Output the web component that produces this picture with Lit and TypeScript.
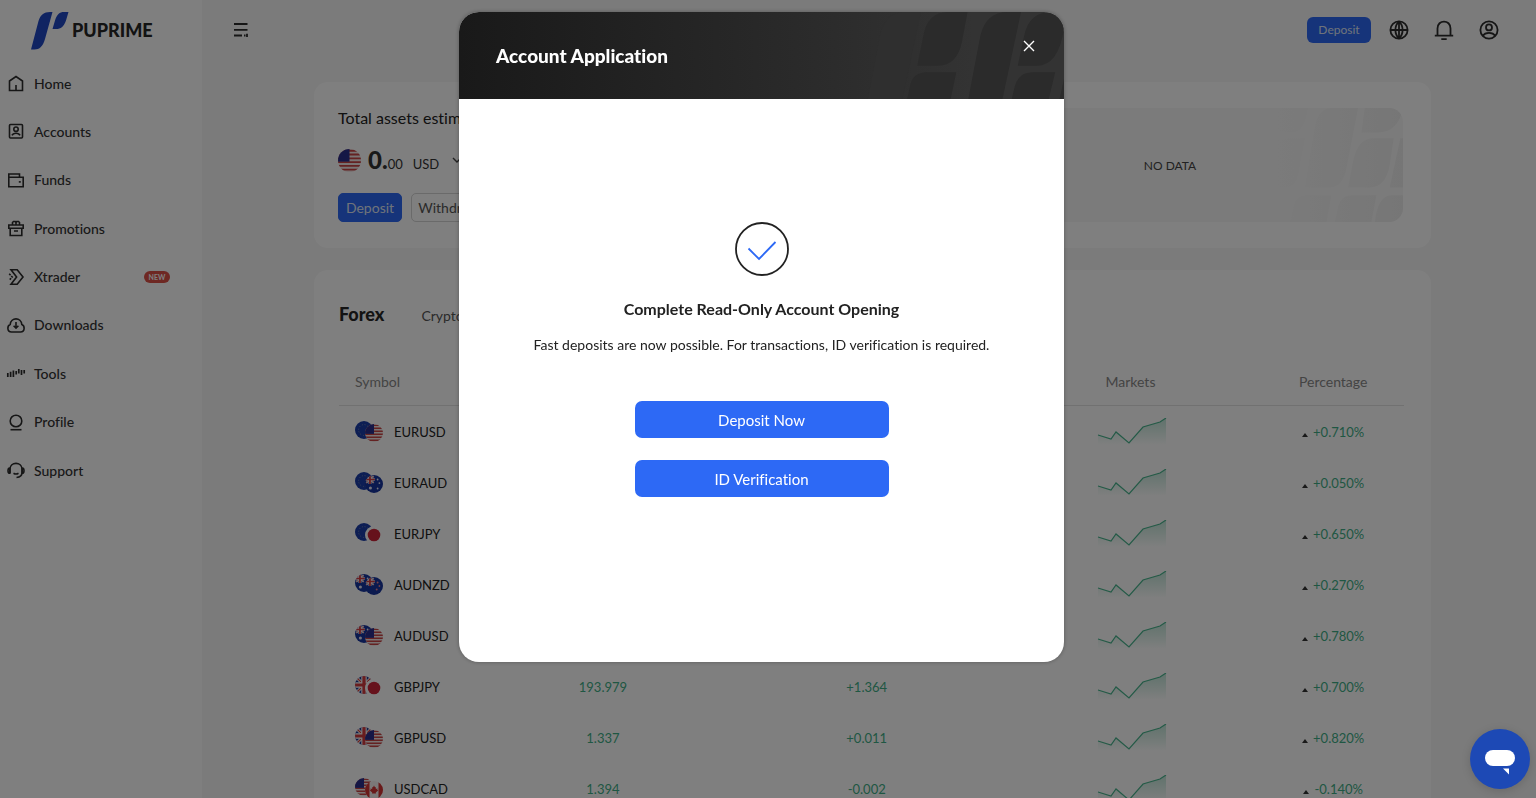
import { LitElement, html, svg, css, nothing, type SVGTemplateResult } from "lit";
import { customElement, property } from "lit/decorators.js";

type Quote = { symbol: string; pct: string; price?: string; change?: string };

const QUOTES: Quote[] = [
  { symbol: "EURUSD", pct: "+0.710%" },
  { symbol: "EURAUD", pct: "+0.050%" },
  { symbol: "EURJPY", pct: "+0.650%" },
  { symbol: "AUDNZD", pct: "+0.270%" },
  { symbol: "AUDUSD", pct: "+0.780%" },
  { symbol: "GBPJPY", pct: "+0.700%", price: "193.979", change: "+1.364" },
  { symbol: "GBPUSD", pct: "+0.820%", price: "1.337", change: "+0.011" },
  { symbol: "USDCAD", pct: "-0.140%", price: "1.394", change: "-0.002" },
];

// Sidebar glyphs on a 20x20 grid.
const NAV: { label: string; badge?: string; icon: SVGTemplateResult }[] = [
  {
    label: "Home",
    icon: svg`<path d="M3.500 8 10 3.500 16.500 8v9.500h-13z"/><path d="M10 12v5.500"/>`,
  },
  {
    label: "Accounts",
    icon: svg`<rect x="3.500" y="3.500" width="13" height="13.500" rx="1"/><circle cx="10" cy="8.200" r="2.200"/><path d="M6 14.400c1.200-2.800 6.800-2.800 8 0"/>`,
  },
  {
    label: "Funds",
    icon: svg`<path d="M2.800 7.200V4h10.700v3.200M2.800 7.200h14.400v9.500H2.800z"/><path d="M12.800 11.900h2"/>`,
  },
  {
    label: "Promotions",
    icon: svg`<path d="M2.800 7h14.400v3.300H2.800zM4.200 10.300h11.600v7.200H4.200z"/><path d="M6.500 7V4.500L7.500 3.500h1.800l.700 1 .700-1h1.800l1 1V7M10 4.500V7M8 13h4"/>`,
  },
  {
    label: "Xtrader",
    badge: "NEW",
    icon: svg`<path d="M5 2.800h6.200L17 10l-5.800 7.200H5L10.600 10z"/><path d="m3.200 6.800 3 3.200-3 3.200" stroke-dasharray="2 1"/>`,
  },
  {
    label: "Downloads",
    icon: svg`<path d="M5.500 17C.800 17 1 10.500 4.200 9.500c.500-7.500 11.100-7.500 11.600 0 3.200 1 3.400 7.500-1.300 7.500z"/><path d="M10 7v6M7.600 10.800 10 13.200l2.400-2.400"/>`,
  },
  {
    label: "Tools",
    icon: svg`<path stroke-width="1.700" d="M1.800 10v4M4.600 8.800v5.200M7.400 7.500V14M10.200 8v3.500M12.800 6v4.500M15.500 7v5M18.200 7v3.500"/>`,
  },
  {
    label: "Profile",
    icon: svg`<circle cx="10" cy="9" r="5.800"/><path d="M4.500 17.700h11"/>`,
  },
  {
    label: "Support",
    icon: svg`<path d="M4 13V9c0-7.500 12-7.500 12 0v4c0 2.400-2 4-5.500 4.500"/><path d="M3.800 8C1.400 8 1.400 13.300 3.800 13.300zM16.200 8c2.400 0 2.400 5.300 0 5.300z"/><path d="M7.500 13.200c1.500.900 3.500.900 5 0"/>`,
  },
];

const UNION = svg`
  <path d="M2.500 2.500l15 15M17.500 2.500l-15 15" stroke="#fff" stroke-width="3.400"/>
  <path d="M2.500 2.500l15 15M17.500 2.500l-15 15" stroke="#d8453f" stroke-width="1.200"/>
  <path d="M10 0v20M0 10h20" stroke="#fff" stroke-width="6"/>
  <path d="M10 0v20M0 10h20" stroke="#d23a3f" stroke-width="3.600"/>`;

const southern = (stars: SVGTemplateResult) => svg`
  <rect width="20" height="20" fill="#17349e"/>
  <svg width="11" height="10" viewBox="0 0 20 20" preserveAspectRatio="none">${UNION}</svg>${stars}`;

const FLAGS: Record<string, SVGTemplateResult> = {
  USD: svg`
    <rect width="20" height="20" fill="#f3e6e6"/>
    <path stroke="#c84444" stroke-width="1.600" d="M0 1.500h20M0 4.800h20M0 8.100h20M0 11.400h20M0 14.700h20M0 18h20"/>
    <rect width="10" height="11" fill="#2b2f8c"/>`,
  EUR: svg`
    <rect width="20" height="20" fill="#1a3ca8"/>
    <circle cx="10" cy="10" r="6" fill="none" stroke="#8a93a8" stroke-width="1" stroke-dasharray="1 2.140"/>`,
  JPY: svg`<rect width="20" height="20" fill="#fff"/><circle cx="10" cy="10" r="7" fill="#cc2439"/>`,
  GBP: svg`<rect width="20" height="20" fill="#1e3590"/>${UNION}`,
  AUD: southern(svg`<g fill="#e6e6f4"><circle cx="6" cy="14.500" r="1.700"/><circle cx="14" cy="5" r="1"/><circle cx="16" cy="9" r="1"/><circle cx="14" cy="15" r="1"/></g>`),
  NZD: southern(svg`<g fill="#e8808a"><circle cx="14" cy="6" r="1.100"/><circle cx="16" cy="10" r="1"/><circle cx="13" cy="14" r="1.100"/></g>`),
  CAD: svg`
    <rect width="20" height="20" fill="#f6f0f0"/>
    <path d="M0 0h5v20H0zM15 0h5v20h-5z" fill="#d23535"/>
    <path d="m10 5 1.200 2.200 1-.400-.200 2 2-.600-.400 1.600 1 .800-2.600 2.200.200 1H7.800l.200-1-2.600-2.200 1-.800L6 8.200l2 .600-.200-2 1 .400z" fill="#d23535"/>`,
};

@customElement("flag-disc")
class FlagDisc extends LitElement {
  @property() code = "USD";
  static styles = css`
    :host { display: block; border-radius: 50%; overflow: hidden; }
    .flag { display: block; width: 100%; height: 100%; }
  `;
  render() {
    return html`<svg class="flag" viewBox="0 0 20 20" aria-hidden="true">${FLAGS[this.code]}</svg>`;
  }
}

@customElement("side-nav")
class SideNav extends LitElement {
  static styles = css`
    :host { display: block; background: #fff; }
    .logo { display: flex; align-items: center; gap: 3px; padding: 11px 0 0 30px; color: #262626; }
    .mark { width: 39px; height: 39px; }
    .name { font-size: 18px; font-weight: 900; line-height: 39px; }
    .list { display: flex; flex-direction: column; justify-content: space-between; min-height: 411px;
      margin: 21px 0 0; padding: 0; list-style: none; }
    .link { display: flex; align-items: center; height: 24px; padding: 0 32px 0 6px; gap: 8px;
      font-size: 14px; font-weight: 500; color: #333; text-decoration: none; }
    .icon { width: 20px; height: 20px; fill: none; stroke: #2c2c2c; stroke-width: 1.6; }
    .badge { margin-left: auto; width: 26px; border-radius: 6px; background: #dc5046; color: #fff;
      font-size: 7px; font-weight: 700; line-height: 12px; text-align: center; }
  `;
  render() {
    return html`
      <div class="logo">
        <svg class="mark" viewBox="0 0 39 39" aria-hidden="true">
          <path fill="#2149c4" d="M1 38.500 8.500 10C10.300 4 14 1 20 1h2.500L15 28C13 35.500 9.500 38.500 4.500 38.500zM22.500 18 25 9.500C26.800 3.500 29.500 1 34 1h4.500L36 9.500C34 15.500 31 18 26 18z"/>
        </svg>
        <span class="name">PUPRIME</span>
      </div>
      <nav aria-label="Main">
        <ul class="list">
          ${NAV.map(
            (n) => html`<li><a class="link" href="#">
              <svg class="icon" viewBox="0 0 20 20" aria-hidden="true">${n.icon}</svg>
              <span>${n.label}</span>
              ${n.badge ? html`<span class="badge">${n.badge}</span>` : nothing}
            </a></li>`
          )}
        </ul>
      </nav>`;
  }
}

@customElement("top-bar")
class TopBar extends LitElement {
  static styles = css`
    :host { display: flex; align-items: center; height: 60px; padding: 0 36px 0 28px; }
    button { border: 0; padding: 0; background: none; font: inherit; }
    .icon { display: block; width: 22px; height: 22px; fill: none; stroke: #2c2c2c; stroke-width: 1.8; }
    .right { display: flex; align-items: center; margin-left: auto; gap: 23px; }
    .deposit { width: 64px; height: 26px; margin-right: -6px; border-radius: 6px; background: #2d68f5;
      color: #dfe6f5; font-size: 12px; line-height: 26px; }
  `;
  render() {
    return html`
      <button aria-label="Toggle menu">
        <svg class="icon" viewBox="0 0 22 22"><path d="M4 5h13.500M4 10.800h13.500M4 16.500h8M14 16.500h1.500M17 14.800v3.200"/></svg>
      </button>
      <div class="right">
        <button class="deposit">Deposit</button>
        <button aria-label="Language">
          <svg class="icon" viewBox="0 0 22 22"><circle cx="11" cy="11" r="8.600"/><path d="M2.400 11h17.200M11 2.400v17.200M11 2.400c-4.800 4.600-4.800 12.600 0 17.200M11 2.400c4.800 4.600 4.800 12.600 0 17.200"/></svg>
        </button>
        <button aria-label="Notifications">
          <svg class="icon" viewBox="0 0 22 22"><path d="M4.500 16.500V9.500c0-9.300 13-9.300 13 0v7M1.800 16.700h18.400M8.300 20.200h5.400"/></svg>
        </button>
        <button aria-label="Profile">
          <svg class="icon" viewBox="0 0 22 22"><circle cx="11" cy="11" r="8.600"/><circle cx="11" cy="8.400" r="3"/><path d="M4.800 16.800c2.400-4 10-4 12.400 0"/></svg>
        </button>
      </div>`;
  }
}

@customElement("assets-card")
class AssetsCard extends LitElement {
  static styles = css`
    :host { display: flex; gap: 24px; padding: 25px 28px 26px 24px; border-radius: 14px; background: #fff; }
    .left { flex: 5; }
    .title { margin: 0; font-size: 16px; font-weight: 400; line-height: 22px; color: #222; }
    .balance { display: flex; align-items: center; height: 30px; margin: 16px 0 18px; color: #333; }
    .flag { width: 23px; height: 23px; margin-right: 7px; }
    .whole { font-size: 24px; font-weight: 900; line-height: 28px; }
    .sum { display: flex; align-items: baseline; gap: 10px; }
    .cents { font-size: 13px; }
    .chevron { width: 10px; height: 10px; margin-left: 13px; fill: none; stroke: #444; stroke-width: 1.4; }
    .actions { display: flex; gap: 9px; }
    button { height: 29px; padding: 0; border: 1px solid #d4d4d4; border-radius: 5px; background: none;
      font: inherit; font-size: 14px; line-height: 26px; color: #555; }
    .primary { width: 64px; border-color: #2d68f5; background: #2d68f5; color: #dfe6f5; }
    .plain { width: 76px; }
    .panel { flex: 0 0 466px; display: grid; margin-top: 1px; border-radius: 14px; overflow: hidden; background: #f7f7f7; }
    .panel > * { grid-area: 1 / 1; }
    .empty { place-self: center; font-size: 12px; color: #444; }
    .art { justify-self: end; width: 143px; height: 114px; }
  `;
  render() {
    return html`
      <div class="left">
        <h2 class="title">Total assets estimation</h2>
        <div class="balance">
          <flag-disc class="flag" code="USD"></flag-disc>
          <span class="sum"><span><span class="whole">0.</span><span class="cents">00</span></span><span class="cents">USD</span></span>
          <svg class="chevron" viewBox="0 0 10 10"><path d="m1 3 4 4 4-4"/></svg>
        </div>
        <div class="actions"><button class="primary">Deposit</button><button class="plain">Withdraw</button></div>
      </div>
      <div class="panel">
        <svg class="art" viewBox="600 85 430 340" preserveAspectRatio="none" aria-hidden="true">
          <defs><linearGradient id="f" x1="600" x2="1030" y1="0" y2="0" gradientUnits="userSpaceOnUse">
            <stop offset="0" stop-color="#efefef" stop-opacity="0"/><stop offset="1" stop-color="#ededed"/>
          </linearGradient></defs>
          <path fill="url(#f)" d="M905 158 915 85h115q-15 73-75 73zM865 322l15-80q15-67 60-67h62l-12 80q-12 67-60 67zM990 322l32-147h8v147zM735 322l30-180q10-57 50-57h80l-35 180q-12 57-50 57zM825 425l10-45q8-35 40-35h75l-15 80zM945 425q10-80 50-80h35v80zM620 158l10-40q10-33 40-33h75l-10 40q-10 33-45 33zM610 322l20-110q8-37 40-37h65l-20 110q-8 37-45 37zM690 425l10-45q8-35 40-35h75l-15 80z"/>
        </svg>
        <span class="empty">NO DATA</span>
      </div>`;
  }
}

@customElement("quotes-card")
class QuotesCard extends LitElement {
  static styles = css`
    :host { display: block; padding: 32px 27px 0 25px; border-radius: 14px; background: #fff; }
    .tabs { display: flex; align-items: baseline; gap: 37px; }
    .tabs button { padding: 0; border: 0; background: none; font: inherit; font-size: 14px; line-height: 24px; color: #555; }
    .tabs .active { font-size: 18px; font-weight: 900; color: #262626; }
    table { width: 100%; margin-top: 30px; border-collapse: collapse; table-layout: fixed; font-size: 13px; }
    .narrow { width: 12.4%; }
    .last { width: 13.3%; }
    th { height: 47px; padding: 0; border-bottom: 1px solid #e2e2e2; font-weight: 400; font-size: 14px; color: #888; }
    td { height: 51px; padding: 0; text-align: center; color: #3fae86; }
    .first { padding-left: 16px; text-align: left; }
    .symbol { display: flex; align-items: center; color: #222; }
    .pair { display: flex; width: 28px; margin-right: 11px; }
    .base { width: 18px; height: 18px; }
    .quote { width: 18px; height: 18px; margin: 3px 0 0 -8px; }
    .spark { display: block; width: 74px; height: 28px; margin: 0 auto; }
    .arrow { display: inline-block; margin-right: 5px; border: 3px solid transparent; border-top: 0; border-bottom: 4px solid #333; }
  `;
  render() {
    return html`
      <div class="tabs"><button class="active">Forex</button><button>Crypto</button></div>
      <table>
        <colgroup><col class="narrow"><col><col><col><col class="last"></colgroup>
        <thead><tr><th class="first">Symbol</th><th></th><th></th><th>Markets</th><th>Percentage</th></tr></thead>
        <tbody>
          ${QUOTES.map(
            (q) => html`<tr>
              <td class="first"><div class="symbol">
                <span class="pair">
                  <flag-disc class="base" code=${q.symbol.slice(0, 3)}></flag-disc>
                  <flag-disc class="quote" code=${q.symbol.slice(3)}></flag-disc>
                </span>${q.symbol}</div></td>
              <td>${q.price ?? nothing}</td>
              <td>${q.change ?? nothing}</td>
              <td><svg class="spark" viewBox="-4 0 74 28" aria-hidden="true">
                <defs><linearGradient id="g" x1="0" x2="0" y1="0" y2="1"><stop offset="0" stop-color="#49b58e" stop-opacity=".35"/><stop offset="1" stop-color="#49b58e" stop-opacity="0"/></linearGradient></defs>
                <path fill="url(#g)" d="m1 17 13 4 5-7 13 11L46 9l17-5 6-4v27H1z"/>
                <path fill="none" stroke="#49b58e" stroke-width="1.200" d="m1 17 13 4 5-7 13 11L46 9l17-5 6-4"/>
              </svg></td>
              <td><span class="arrow"></span>${q.pct}</td>
            </tr>`
          )}
        </tbody>
      </table>`;
  }
}

@customElement("application-dialog")
class ApplicationDialog extends LitElement {
  static styles = css`
    :host { display: block; width: 605px; min-height: 650px; border-radius: 20px; overflow: hidden; background: #fff;
      box-shadow: 0 0 4px rgba(0, 0, 0, 0.3); }
    .head { display: grid; align-items: center; height: 87px; background: linear-gradient(90deg, #191919, #333 85%); color: #fff; }
    .head > * { grid-area: 1 / 1; }
    .art { justify-self: end; width: 201px; height: 87px; }
    .title { margin: 0; padding-left: 37px; font-size: 19px; font-weight: 900; line-height: 26px; }
    .close { place-self: start end; width: 28px; height: 28px; margin: 20px 21px 0 0; padding: 7px; border: 0; background: none; }
    .cross { display: block; width: 14px; height: 14px; stroke: #fff; stroke-width: 1.4; }
    .body { display: flex; flex-direction: column; align-items: center; padding: 123px 24px 24px; text-align: center; color: #222; }
    .tick { width: 54px; height: 54px; fill: none; }
    .lead { margin: 21px 0 0; font-size: 16px; font-weight: 700; line-height: 24px; }
    .text { margin: 14px 0 46px; font-size: 14px; line-height: 20px; }
    .action { width: 254px; height: 37px; margin-bottom: 22px; padding: 0; border: 0; border-radius: 7px; background: #2d69f5;
      color: #fff; font: inherit; font-size: 15px; line-height: 36px; }
  `;
  render() {
    return html`
      <header class="head">
        <svg class="art" viewBox="1028 37 500 261" preserveAspectRatio="none" aria-hidden="true">
          <path fill="#2b2b2b" d="M1163 198 1178 110Q1188 37 1240 37h48l-14 90q-12 71-60 71zM1290 298l30-190q14-71 68-71h33l-46 261zM1413 198l16-90q12-71 68-71h31v50q-14 111-68 111zM1138 298l8-44q8-36 42-36h72l-14 80zM1398 298l8-40q10-40 44-40h56l-16 80zM1517 298l11-60v60z"/>
          <path fill="#2f2f2f" d="M1040 298l30-190q14-71 60-71h42l-46 261z"/>
        </svg>
        <h1 class="title">Account Application</h1>
        <button class="close" aria-label="Close"><svg class="cross" viewBox="0 0 14 14"><path d="m2 2 10 10M12 2 2 12"/></svg></button>
      </header>
      <div class="body">
        <svg class="tick" viewBox="0 0 54 54" aria-hidden="true">
          <circle cx="27" cy="27" r="26" stroke="#222" stroke-width="1.800"/>
          <path d="m13.500 26.500 10.500 10.500 16.500-17" stroke="#2d69f5" stroke-width="1.800"/>
        </svg>
        <h2 class="lead">Complete Read-Only Account Opening</h2>
        <p class="text">Fast deposits are now possible. For transactions, ID verification is required.</p>
        <button class="action">Deposit Now</button>
        <button class="action">ID Verification</button>
      </div>`;
  }
}

@customElement("app-root")
class AppRoot extends LitElement {
  static styles = css`
    :host { display: flex; height: 100vh; overflow: hidden; background: #f7f7f7; font-family: Lato, "Open Sans", sans-serif;
      font-variant-ligatures: none; }
    .side { flex: 0 0 202px; }
    .main { flex: 1; min-width: 0; }
    .content { display: flex; flex-direction: column; gap: 22px; padding: 22px 105px 22px 112px; }
    .scrim { position: fixed; inset: 0; display: flex; justify-content: center; align-items: flex-start;
      padding: 12px 13px 0 0; background: rgba(0, 0, 0, 0.5); }
    .chat { position: fixed; right: 6px; bottom: 9px; width: 60px; height: 60px; padding: 0; border: 0; border-radius: 50%;
      background: #1d49b5; box-shadow: 0 2px 10px rgba(0, 0, 0, 0.15); }
    .bubble { display: block; width: 60px; height: 60px; }
  `;
  render() {
    return html`
      <side-nav class="side"></side-nav>
      <div class="main">
        <top-bar></top-bar>
        <main class="content"><assets-card></assets-card><quotes-card></quotes-card></main>
      </div>
      <div class="scrim"><application-dialog role="dialog" aria-modal="true" aria-label="Account Application"></application-dialog></div>
      <button class="chat" aria-label="Open chat">
        <svg class="bubble" viewBox="0 0 60 60"><rect x="15" y="21" width="30" height="16" rx="8" fill="#fff"/><path d="M33 39.500h6v6z" fill="#fff"/></svg>
      </button>`;
  }
}
